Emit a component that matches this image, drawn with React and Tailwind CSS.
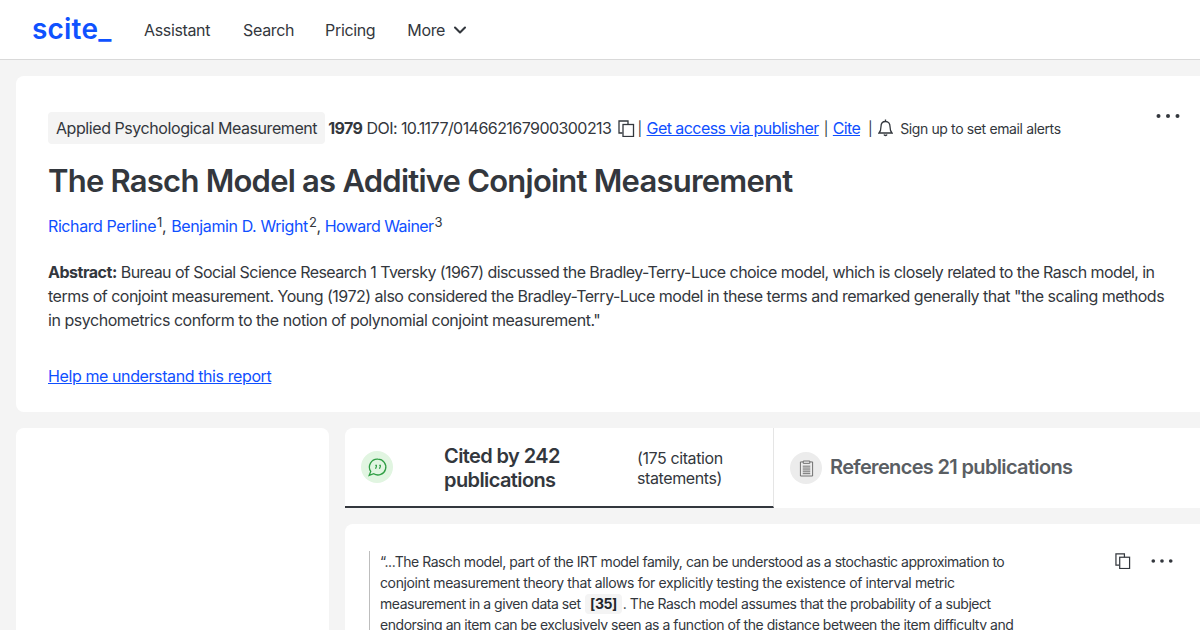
import React from 'react';
import { ChevronDown } from 'lucide-react';

const CopyIcon = ({ className }) => (
  <svg viewBox="0 0 17 17" fill="none" stroke="#33373d" strokeWidth="1.3" className={className}>
    <path d="M4.5 13H1V1h9v3.5" />
    <rect x="5" y="4.5" width="10.5" height="12" />
  </svg>
);

const Dots = ({ className }) => (
  <svg viewBox="0 0 24 4" className={className} fill="#33373d">
    <circle cx="2.5" cy="2" r="2" />
    <circle cx="12" cy="2" r="2" />
    <circle cx="21.5" cy="2" r="2" />
  </svg>
);

const Sup = ({ children }) => <sup className="text-[13px] text-[#33373d] -top-[5px] ml-[1px]">{children}</sup>;

const App = () => {
  return (
    <div className="w-[1200px] h-[630px] overflow-hidden bg-[#f4f4f4] text-[#33373d] font-['Inter',sans-serif]">
      {/* Header */}
      <header className="h-[60px] bg-white border-b border-[#d9d9d9] flex items-center pl-[32px]">
        <div className="text-[28px] font-semibold text-[#0f52ff] w-[112px] leading-none -mt-[2px] tracking-[0.2px]">scite_</div>
        <nav className="flex items-center gap-[31px] text-[16px] tracking-[-0.35px]">
          <span>Assistant</span>
          <span className="ml-[2px]">Search</span>
          <span>Pricing</span>
          <span className="flex items-center gap-[5px] ml-[1px]">
            More
            <ChevronDown className="w-[20px] h-[20px]" strokeWidth={2.5} />
          </span>
        </nav>
      </header>

      <main className="pt-[16px] pl-[16px]">
        {/* Paper card */}
        <section className="relative h-[336px] bg-white rounded-l-lg pl-[32px] pt-[36px]">
          <Dots className="absolute right-[20px] top-[38px] w-[24px] h-[4px]" />
          <div className="flex items-center h-[32px] text-[16px] tracking-[-0.55px] whitespace-nowrap">
            <span className="bg-[#f4f4f4] rounded px-[8px] h-[32px] leading-[32px] tracking-[-0.43px]">Applied Psychological Measurement</span>
            <strong className="ml-[3px] font-bold">1979</strong>
            <span className="ml-[4px]">DOI: 10.1177/014662167900300213</span>
            <CopyIcon className="w-[17px] h-[17px] ml-[7px]" />
            <span className="ml-[2px] text-[14px]">|</span>
            <a className="ml-[5px] text-[#0f4fff] underline">Get access via publisher</a>
            <span className="ml-[5px] text-[14px]">|</span>
            <a className="ml-[5px] text-[#0f4fff] underline tracking-[-0.7px]">Cite</a>
            <span className="ml-[8px] text-[14px]">|</span>
            <svg viewBox="0 0 15 18" className="w-[15px] h-[18px] ml-[6px]" fill="none" stroke="#33373d" strokeWidth="1.3">
              <path d="M1 14h13c-1.5-1.5-2-3-2-6.5C12 4.5 10.5 2.5 7.5 2.5S3 4.5 3 7.5C3 11 2.5 12.5 1 14Z" />
              <path d="M7.5 0.5v2M6 15.5c.3 1.3 2.7 1.3 3 0" />
            </svg>
            <span className="ml-[7px] text-[14px] tracking-[-0.37px]">Sign up to set email alerts</span>
          </div>
          <h1 className="mt-[17px] text-[31px] leading-[40px] font-semibold tracking-[-0.77px]">The Rasch Model as Additive Conjoint Measurement</h1>
          <div className="mt-[13px] text-[16px] leading-[24px] tracking-[-0.4px] text-[#0f4fff]">
            <span>Richard Perline</span><Sup>1</Sup><span className="text-[#33373d] mr-[1px]">, </span>
            <span>Benjamin D. Wright</span><Sup>2</Sup><span className="text-[#33373d]">, </span>
            <span className="tracking-[-0.55px]">Howard Wainer</span><Sup>3</Sup>
          </div>
          <div className="mt-[22px] text-[16px] leading-[24px] whitespace-nowrap">
            <p className="tracking-[-0.56px]"><strong className="font-bold tracking-[-0.47px]">Abstract:</strong> Bureau of Social Science Research 1 Tversky (1967) discussed the Bradley-Terry-Luce choice model, which is closely related to the Rasch model, in</p>
            <p className="tracking-[-0.5px]">terms of conjoint measurement. Young (1972) also considered the Bradley-Terry-Luce model in these terms and remarked generally that "the scaling methods</p>
            <p className="tracking-[-0.46px]">in psychometrics conform to the notion of polynomial conjoint measurement."</p>
          </div>
          <a className="block mt-[32px] text-[16px] leading-[24px] tracking-[-0.4px] text-[#0f4fff] underline">Help me understand this report</a>
        </section>

        <div className="flex mt-[16px] gap-[16px]">
          {/* Left filter panel */}
          <aside className="w-[313px] h-[300px] bg-white rounded-lg shrink-0" />

          <div className="flex-1 min-w-0">
            {/* Tabs */}
            <div className="flex h-[80px] bg-white rounded-tl-lg">
              <div className="w-[429px] h-[80px] flex items-center border-b-2 border-[#33373d] border-r border-r-[#e5e5e5] pl-[16px]">
                <span className="w-[32px] h-[32px] rounded-full bg-[#e1f5e1] flex items-center justify-center shrink-0">
                  <svg viewBox="0 0 24 24" className="w-[21px] h-[21px]" fill="none" stroke="#2f9e44" strokeWidth="1.5">
                    <path d="M12.5 2.5a9 9 0 1 1-4.8 16.6L2.5 21l1.8-4.5A9 9 0 0 1 12.5 2.5Z" />
                    <path d="M9.5 9.5h1.2V11l-1 2.5M14 9.5h1.2V11l-1 2.5" strokeWidth="1.4" />
                  </svg>
                </span>
                <span className="ml-[51px] w-[193px] pt-[2px] text-[20px] leading-[24px] font-semibold tracking-[-0.6px]">Cited by 242<br />publications</span>
                <span className="pt-[2px] text-[16px] leading-[20px] tracking-[-0.4px]">(175 citation<br />statements)</span>
              </div>
              <div className="flex-1 flex items-center pl-[16px] text-[#5a5e63]">
                <span className="w-[32px] h-[32px] rounded-full bg-[#ececec] flex items-center justify-center shrink-0">
                  <svg viewBox="0 0 16 18" className="w-[15px] h-[17px]" fill="none" stroke="#6a6a6a" strokeWidth="1">
                    <path d="M4.5 2H1.5v15h13V2h-3" />
                    <path d="M4.5 1h7v2.5h-7zM4 6.5h8M4 8.5h8M4 10.5h8M4 12.5h8M4 14.5h8" />
                  </svg>
                </span>
                <span className="ml-[8px] -mt-[2px] text-[20px] font-semibold tracking-[-0.66px]">References 21 publications</span>
              </div>
            </div>

            {/* Citation statement */}
            <div className="relative mt-[16px] h-[200px] bg-white rounded-tl-lg pl-[24px] pt-[27px]">
              <CopyIcon className="absolute left-[770px] top-[29px] w-[16px] h-[16px]" />
              <Dots className="absolute left-[806px] top-[35px] w-[22px] h-[4px]" />
              <blockquote className="border-l border-[#bdbdbd] pl-[10px] text-[14px] leading-[21px] whitespace-nowrap">
                <p className="tracking-[-0.47px]">“...The Rasch model, part of the IRT model family, can be understood as a stochastic approximation to</p>
                <p className="tracking-[-0.375px]">conjoint measurement theory that allows for explicitly testing the existence of interval metric</p>
                <p className="tracking-[-0.46px]">measurement in a given data set <span className="inline-block bg-[#f4f4f4] rounded px-[5px] mx-[1px] font-bold leading-[20px] text-[#22262b]">[35]</span>. The Rasch model assumes that the probability of a subject</p>
                <p className="tracking-[-0.46px]">endorsing an item can be exclusively seen as a function of the distance between the item difficulty and</p>
              </blockquote>
            </div>
          </div>
        </div>
      </main>
    </div>
  );
};

export default App;
